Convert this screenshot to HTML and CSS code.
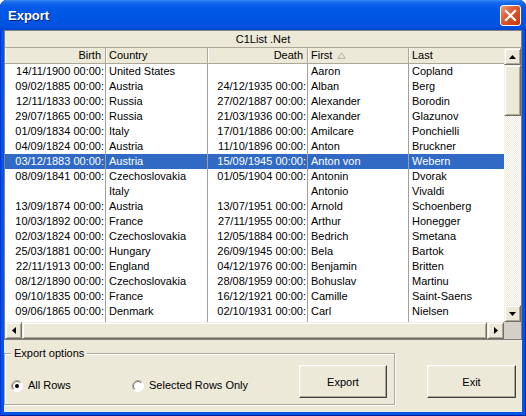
FILE: index.html
```html
<!DOCTYPE html>
<html>
<head>
<meta charset="utf-8">
<link rel="stylesheet" href="styles.css">
</head>
<body>
<div class="window">
  <div class="titlebar">
    <span class="title">Export</span>
    <span class="close">
      <svg width="19" height="19" viewBox="0 0 19 19"><path d="M5 5 L14 14 M14 5 L5 14" stroke="#fff" stroke-width="2.2" stroke-linecap="square"/></svg>
    </span>
  </div>
  <div class="client">
    <div class="grid">
      <div class="caption">C1List .Net</div>
      <div class="middle">
        <div class="table">
          <div class="row head">
            <div class="cell r">Birth</div>
            <div class="cell">Country</div>
            <div class="cell r">Death</div>
            <div class="cell">First <svg class="sort" width="9" height="7" viewBox="0 0 9 7"><path d="M4.5 0.8 L8.2 6.4 L0.8 6.4 Z" fill="none" stroke="#B4B2A6" stroke-width="1"/></svg></div>
            <div class="cell">Last</div>
          </div>
          <div class="rows">
            <div class="row"><div class="cell r">14/11/1900 00:00:</div><div class="cell">United States</div><div class="cell r"></div><div class="cell">Aaron</div><div class="cell">Copland</div></div>
            <div class="row"><div class="cell r">09/02/1885 00:00:</div><div class="cell">Austria</div><div class="cell r">24/12/1935 00:00:</div><div class="cell">Alban</div><div class="cell">Berg</div></div>
            <div class="row"><div class="cell r">12/11/1833 00:00:</div><div class="cell">Russia</div><div class="cell r">27/02/1887 00:00:</div><div class="cell">Alexander</div><div class="cell">Borodin</div></div>
            <div class="row"><div class="cell r">29/07/1865 00:00:</div><div class="cell">Russia</div><div class="cell r">21/03/1936 00:00:</div><div class="cell">Alexander</div><div class="cell">Glazunov</div></div>
            <div class="row"><div class="cell r">01/09/1834 00:00:</div><div class="cell">Italy</div><div class="cell r">17/01/1886 00:00:</div><div class="cell">Amilcare</div><div class="cell">Ponchielli</div></div>
            <div class="row"><div class="cell r">04/09/1824 00:00:</div><div class="cell">Austria</div><div class="cell r">11/10/1896 00:00:</div><div class="cell">Anton</div><div class="cell">Bruckner</div></div>
            <div class="row sel"><div class="cell r">03/12/1883 00:00:</div><div class="cell">Austria</div><div class="cell r">15/09/1945 00:00:</div><div class="cell">Anton von</div><div class="cell">Webern</div></div>
            <div class="row"><div class="cell r">08/09/1841 00:00:</div><div class="cell">Czechoslovakia</div><div class="cell r">01/05/1904 00:00:</div><div class="cell">Antonin</div><div class="cell">Dvorak</div></div>
            <div class="row"><div class="cell r"></div><div class="cell">Italy</div><div class="cell r"></div><div class="cell">Antonio</div><div class="cell">Vivaldi</div></div>
            <div class="row"><div class="cell r">13/09/1874 00:00:</div><div class="cell">Austria</div><div class="cell r">13/07/1951 00:00:</div><div class="cell">Arnold</div><div class="cell">Schoenberg</div></div>
            <div class="row"><div class="cell r">10/03/1892 00:00:</div><div class="cell">France</div><div class="cell r">27/11/1955 00:00:</div><div class="cell">Arthur</div><div class="cell">Honegger</div></div>
            <div class="row"><div class="cell r">02/03/1824 00:00:</div><div class="cell">Czechoslovakia</div><div class="cell r">12/05/1884 00:00:</div><div class="cell">Bedrich</div><div class="cell">Smetana</div></div>
            <div class="row"><div class="cell r">25/03/1881 00:00:</div><div class="cell">Hungary</div><div class="cell r">26/09/1945 00:00:</div><div class="cell">Bela</div><div class="cell">Bartok</div></div>
            <div class="row"><div class="cell r">22/11/1913 00:00:</div><div class="cell">England</div><div class="cell r">04/12/1976 00:00:</div><div class="cell">Benjamin</div><div class="cell">Britten</div></div>
            <div class="row"><div class="cell r">08/12/1890 00:00:</div><div class="cell">Czechoslovakia</div><div class="cell r">28/08/1959 00:00:</div><div class="cell">Bohuslav</div><div class="cell">Martinu</div></div>
            <div class="row"><div class="cell r">09/10/1835 00:00:</div><div class="cell">France</div><div class="cell r">16/12/1921 00:00:</div><div class="cell">Camille</div><div class="cell">Saint-Saens</div></div>
            <div class="row"><div class="cell r">09/06/1865 00:00:</div><div class="cell">Denmark</div><div class="cell r">02/10/1931 00:00:</div><div class="cell">Carl</div><div class="cell">Nielsen</div></div>
            <div class="row filler"><div class="cell"></div><div class="cell"></div><div class="cell"></div><div class="cell"></div><div class="cell"></div></div>
          </div>
        </div>
        <div class="vscroll">
          <div class="sbtn"><svg width="7" height="4" viewBox="0 0 7 4"><path d="M3.5 0 L7 4 L0 4 Z" fill="#000"/></svg></div>
          <div class="vthumb"></div>
          <div class="vtrack"></div>
          <div class="sbtn"><svg width="7" height="4" viewBox="0 0 7 4"><path d="M0 0 L7 0 L3.5 4 Z" fill="#000"/></svg></div>
        </div>
      </div>
      <div class="bottom">
        <div class="hscroll">
          <div class="sbtn"><svg width="4" height="7" viewBox="0 0 4 7"><path d="M4 0 L4 7 L0 3.5 Z" fill="#000"/></svg></div>
          <div class="hthumb"></div>
          <div class="sbtn"><svg width="4" height="7" viewBox="0 0 4 7"><path d="M0 0 L4 3.5 L0 7 Z" fill="#000"/></svg></div>
        </div>
        <div class="corner"></div>
      </div>
    </div>
    <div class="footer">
      <div class="group">
        <span class="legend">Export options</span>
        <label class="opt opt-all">
          <svg class="radio" width="12" height="12" viewBox="0 0 12 12"><circle cx="6" cy="6" r="5.5" fill="#fff" stroke="#fff"/><path d="M2.1 9.9 A5.5 5.5 0 0 1 9.9 2.1" fill="none" stroke="#ACA899"/><path d="M2.8 9.2 A4.5 4.5 0 0 1 9.2 2.8" fill="none" stroke="#716F64"/><circle cx="6" cy="6" r="2" fill="#000"/></svg>
          <span>All Rows</span>
        </label>
        <label class="opt opt-sel">
          <svg class="radio" width="12" height="12" viewBox="0 0 12 12"><circle cx="6" cy="6" r="5.5" fill="#fff" stroke="#fff"/><path d="M2.1 9.9 A5.5 5.5 0 0 1 9.9 2.1" fill="none" stroke="#ACA899"/><path d="M2.8 9.2 A4.5 4.5 0 0 1 9.2 2.8" fill="none" stroke="#716F64"/></svg>
          <span>Selected Rows Only</span>
        </label>
        <div class="btn">Export</div>
      </div>
      <div class="btn exit">Exit</div>
    </div>
  </div>
</div>
</body>
</html>
```

FILE: styles.css
```css
* { box-sizing: border-box; }
html, body { margin: 0; padding: 0; background: #fff; }
body {
  font-family: "Liberation Sans", Arial, sans-serif;
  font-size: 11px;
  color: #000;
}
.window {
  width: 526px;
  height: 416px;
  background: #0055E5;
  border-radius: 7px 7px 0 0;
  padding: 0 4px 4px 4px;
  box-shadow: inset 1px 0 #0831D9, inset -1px 0 #001EA0, inset 0 -1px #001EA0;
  display: flex;
  flex-direction: column;
  overflow: hidden;
}
.titlebar {
  height: 30px;
  margin: 0 -4px;
  border-radius: 7px 7px 0 0;
  background: linear-gradient(to bottom, #3B8BF4 0px, #1A6FF0 2px, #0A5FE9 5px, #0058E6 10px, #0055E3 20px, #0052DE 26px, #0048D0 30px);
  display: flex;
  justify-content: space-between;
  align-items: flex-start;
  padding: 0 5px 0 8px;
}
.title {
  color: #fff;
  font-weight: bold;
  font-size: 13px;
  line-height: 14px;
  margin-top: 9px;
  text-shadow: 1px 1px #0A1E80;
}
.close {
  width: 21px;
  height: 21px;
  margin-top: 5px;
  border: 1px solid #fff;
  border-radius: 3px;
  background: linear-gradient(135deg, #EE9C80 0%, #E0623C 35%, #D2481E 70%, #C03814 100%);
  display: flex;
  align-items: center;
  justify-content: center;
}
.close svg { display: block; }
.client {
  flex: 1;
  background: #ECE9D8;
  display: flex;
  flex-direction: column;
}
.grid {
  height: 310px;
  border: 1px solid #808080;
  display: flex;
  flex-direction: column;
  background: #fff;
}
.caption {
  height: 17px;
  line-height: 16px;
  text-align: center;
  background: #ECE9D8;
  border-bottom: 1px solid #ACA899;
}
.middle {
  height: 274px;
  display: flex;
}
.table {
  width: 499px;
  display: flex;
  flex-direction: column;
  overflow: hidden;
}
.row {
  display: grid;
  grid-template-columns: 101px 102px 100px 101px 95px;
  height: 15px;
  line-height: 15px;
}
.cell {
  border-right: 1px solid #A0A0A0;
  padding: 0 3px;
  white-space: nowrap;
  overflow: hidden;
}
.cell:last-child { border-right: none; }
.rows .cell.r { text-align: right; padding-right: 1px; }
.rows .cell { padding-left: 3px; }
.head {
  height: 16px;
  background: #ECE9D8;
  border-bottom: 1px solid #ACA899;
}
.head .cell {
  border-right: 1px solid #ACA899;
  box-shadow: inset 1px 0 #fff;
}
.head .cell:last-child { border-right: none; }
.head .cell.r { text-align: right; padding-right: 4px; }
.sort { vertical-align: 0px; margin-left: 2px; }
.rows { flex: 1; display: flex; flex-direction: column; }
.filler { flex: 1; }
.sel { background: #316AC5; color: #fff; }
.vscroll {
  width: 17px;
  display: flex;
  flex-direction: column;
}
.sbtn {
  width: 17px;
  height: 17px;
  background: #ECE9D8;
  border: 1px solid;
  border-color: #F1EFE2 #716F64 #716F64 #F1EFE2;
  box-shadow: inset 1px 1px #fff, inset -1px -1px #ACA899;
  display: flex;
  align-items: center;
  justify-content: center;
  flex: none;
}
.sbtn svg { display: block; }
.vthumb {
  height: 51px;
  background: #ECE9D8;
  border: 1px solid;
  border-color: #F1EFE2 #716F64 #716F64 #F1EFE2;
  box-shadow: inset 1px 1px #fff, inset -1px -1px #ACA899;
  flex: none;
}
.vtrack {
  flex: 1;
  background-color: #fff;
  background-image: repeating-conic-gradient(#ECE9D8 0 25%, #fff 0 50%);
  background-size: 2px 2px;
}
.bottom {
  height: 17px;
  display: flex;
}
.hscroll {
  width: 499px;
  display: flex;
}
.hthumb {
  flex: 1;
  background: #ECE9D8;
  border: 1px solid;
  border-color: #F1EFE2 #716F64 #716F64 #F1EFE2;
  box-shadow: inset 1px 1px #fff, inset -1px -1px #ACA899;
}
.corner {
  width: 17px;
  background: #D4D0C8;
}
.footer {
  display: flex;
  align-items: flex-start;
  padding-top: 13px;
}
.group {
  position: relative;
  width: 391px;
  height: 52px;
  border: 1px solid #ACA899;
  box-shadow: inset 1px 1px #fff, 1px 1px #fff;
  display: flex;
  align-items: flex-start;
  padding: 11px 0 0 6px;
}
.legend {
  position: absolute;
  top: -8px;
  left: 6px;
  padding: 0 3px;
  background: #ECE9D8;
  line-height: 15px;
}
.opt {
  display: flex;
  align-items: center;
  height: 13px;
  line-height: 13px;
  margin-top: 14px;
}
.radio { display: block; margin-right: 5px; flex: none; }
.opt-all { width: 121px; }
.opt-sel { width: 167px; }
.btn {
  width: 88px;
  height: 33px;
  background: #ECE9D8;
  border: 1px solid;
  border-color: #fff #404040 #404040 #fff;
  box-shadow: inset -1px -1px #ACA899, inset 1px 1px #F1EFE2;
  display: flex;
  align-items: center;
  justify-content: center;
  font-size: 11px;
}
.exit {
  width: 89px;
  margin-left: 32px;
  margin-top: 12px;
}
```
